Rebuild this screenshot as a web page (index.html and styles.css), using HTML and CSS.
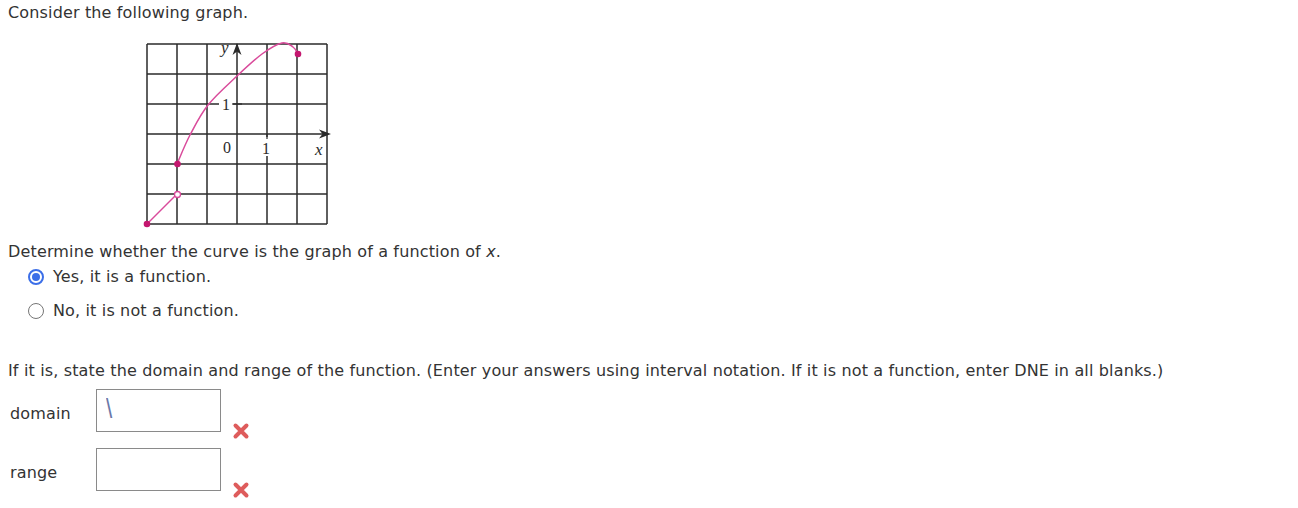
FILE: index.html
```html
<!DOCTYPE html>
<html>
<head>
<meta charset="utf-8">
<link rel="stylesheet" href="styles.css">
</head>
<body>
<div class="page">
  <p class="line title">Consider the following graph.</p>
  <svg class="graph" width="200" height="200" viewBox="137 34 200 200" xmlns="http://www.w3.org/2000/svg">
    <g stroke="#2a2a2a" stroke-width="1.5" fill="none">
      <line x1="147" y1="44" x2="147" y2="224"/>
      <line x1="177" y1="44" x2="177" y2="224"/>
      <line x1="207" y1="44" x2="207" y2="224"/>
      <line x1="237" y1="44" x2="237" y2="224"/>
      <line x1="267" y1="44" x2="267" y2="224"/>
      <line x1="297" y1="44" x2="297" y2="224"/>
      <line x1="327" y1="44" x2="327" y2="224"/>
      <line x1="147" y1="44" x2="327" y2="44"/>
      <line x1="147" y1="74" x2="327" y2="74"/>
      <line x1="147" y1="104" x2="327" y2="104"/>
      <line x1="147" y1="134" x2="327" y2="134"/>
      <line x1="147" y1="164" x2="327" y2="164"/>
      <line x1="147" y1="194" x2="327" y2="194"/>
      <line x1="147" y1="224" x2="327" y2="224"/>
    </g>
    <rect x="219" y="96" width="14" height="16" fill="#fff"/>
    <rect x="260" y="137" width="14" height="19" fill="#fff"/>
    <line x1="232" y1="104" x2="242" y2="104" stroke="#2a2a2a" stroke-width="1.2"/>
    <line x1="267" y1="134" x2="267" y2="139" stroke="#2a2a2a" stroke-width="1.2"/>
    <path d="M237,43 L232.5,55 L237,51.5 L241.5,55 Z" fill="#2a2a2a"/>
    <path d="M331,134 L319,129.5 L322.5,134 L319,138.5 Z" fill="#2a2a2a"/>
    <text class="gl gi" x="221" y="53">y</text>
    <text class="gl" x="222" y="110">1</text>
    <text class="gl" x="223" y="153">0</text>
    <text class="gl" x="262" y="154">1</text>
    <text class="gl gi" x="315" y="155">x</text>
    <line x1="147" y1="224" x2="177" y2="194" stroke="#d94b9b" stroke-width="1.5"/>
    <path d="M177,164 C179.2,159.2 184.8,144.8 190,135 C195.2,125.2 200.2,114.8 208,105 C215.8,95.2 228,84.5 237,76 C246,67.5 254.5,59.5 262,54 C269.5,48.5 276.8,44.2 282,43 C287.2,41.8 290.3,45.2 293,47 C295.7,48.8 297.2,52.8 298,54" fill="none" stroke="#d94b9b" stroke-width="1.5"/>
    <circle cx="147" cy="224" r="3.3" fill="#c4176f"/>
    <circle cx="177.5" cy="164" r="3.3" fill="#c4176f"/>
    <circle cx="298" cy="54" r="3.3" fill="#c4176f"/>
    <circle cx="177.5" cy="194.5" r="3" fill="#fff" stroke="#d94b9b" stroke-width="1.3"/>
  </svg>
  <p class="line determine">Determine whether the curve is the graph of a function of <i>x</i>.</p>
  <div class="choices">
    <label class="choice"><span class="radio checked"></span><span>Yes, it is a function.</span></label>
    <label class="choice"><span class="radio"></span><span>No, it is not a function.</span></label>
  </div>
  <p class="line instr">If it is, state the domain and range of the function. (Enter your answers using interval notation. If it is not a function, enter DNE in all blanks.)</p>
  <div class="answer">
    <span class="alabel">domain</span>
    <div class="box"><span class="typed">\</span></div>
    <svg class="mark" width="18" height="18" viewBox="0 0 18 18"><path d="M3.5,3.5 L14.5,14.5 M14.5,3.5 L3.5,14.5" stroke="#de5c5c" stroke-width="4" stroke-linecap="round"/></svg>
  </div>
  <div class="answer">
    <span class="alabel">range</span>
    <div class="box"></div>
    <svg class="mark" width="18" height="18" viewBox="0 0 18 18"><path d="M3.5,3.5 L14.5,14.5 M14.5,3.5 L3.5,14.5" stroke="#de5c5c" stroke-width="4" stroke-linecap="round"/></svg>
  </div>
</div>
</body>
</html>
```
FILE: styles.css
```css
html, body {
  margin: 0;
  padding: 0;
  background: #fff;
}
.page {
  padding: 4px 8px 17px;
  font-family: "DejaVu Sans", Verdana, sans-serif;
  font-size: 16px;
  letter-spacing: 0.15px;
  color: #333;
}
.line {
  margin: 0;
  line-height: 18px;
}
.graph {
  display: block;
  margin: 12px 0 0 129px;
}
.gl {
  font-family: "Liberation Serif", "Times New Roman", serif;
  font-size: 16px;
  letter-spacing: 0;
  fill: #2a2a2a;
}
.gi {
  font-style: italic;
  font-size: 17px;
}
.determine {
  margin-top: 9px;
}
.determine i {
  font-style: italic;
}
.choices {
  display: flex;
  flex-direction: column;
  gap: 14px;
  margin-top: 6px;
  padding-left: 20px;
}
.choice {
  display: flex;
  align-items: center;
  gap: 9px;
  line-height: 20px;
}
.radio {
  box-sizing: border-box;
  width: 16px;
  height: 16px;
  border-radius: 50%;
  border: 1.5px solid #767676;
  background: #fff;
  position: relative;
}
.radio.checked {
  border: 2px solid #3c6fe8;
}
.radio.checked::after {
  content: "";
  position: absolute;
  left: 2px;
  top: 2px;
  width: 8px;
  height: 8px;
  border-radius: 50%;
  background: #3c6fe8;
}
.instr {
  margin-top: 41px;
}
.answer {
  display: flex;
  align-items: flex-start;
  height: 43px;
  margin-top: 9px;
}
.answer + .answer {
  margin-top: 16px;
}
.alabel {
  box-sizing: border-box;
  width: 88px;
  padding-left: 2px;
  margin-top: 15px;
  line-height: 20px;
}
.box {
  box-sizing: border-box;
  width: 125px;
  height: 43px;
  border: 1px solid #8a8a8a;
  background: #fff;
  padding: 5px 0 0 9px;
  line-height: 28px;
  color: #6a78a8;
}
.typed {
  display: inline-block;
  font-family: "Liberation Sans", Arial, sans-serif;
  font-size: 28px;
  transform: scaleX(0.8);
  transform-origin: left center;
}
.mark {
  margin-left: 11px;
  margin-top: 33px;
  flex-shrink: 0;
}
```
